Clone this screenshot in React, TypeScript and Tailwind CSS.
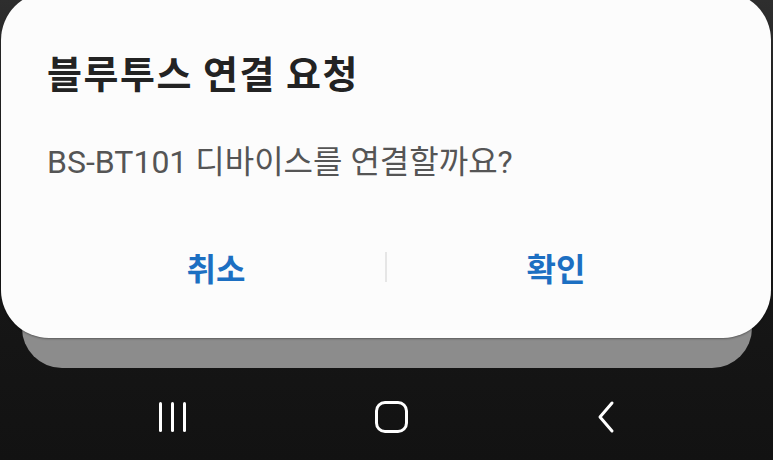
import { ChevronLeft } from 'lucide-react'

function NavBar() {
  return (
    <div className="flex flex-1 items-center justify-between pl-[159px] pr-[157px] pt-[6px]">
      {/* recents */}
      <div className="flex gap-[9px] h-[30px]">
        <span className="w-[3px] h-full rounded-full bg-white" />
        <span className="w-[3px] h-full rounded-full bg-white" />
        <span className="w-[3px] h-full rounded-full bg-white" />
      </div>
      {/* home */}
      <div className="w-[33px] h-[32px] rounded-[10px] border-[3px] border-white" />
      {/* back */}
      <svg width="20" height="34" viewBox="0 0 20 34" fill="none">
        <path d="M16 3 L4 17 L16 31" stroke="white" strokeWidth="3" strokeLinecap="round" strokeLinejoin="round" />
      </svg>
    </div>
  )
}

export default function App() {
  void ChevronLeft
  return (
    <div
      className="w-[773px] h-[460px] overflow-hidden flex flex-col bg-linear-to-b from-[#2e2e2e] via-[#181818] to-[#121212]"
      style={{ fontFamily: 'Roboto, "Noto Sans CJK KR", sans-serif' }}
    >
      {/* dialog stack */}
      <div className="relative -mt-[8px] pb-[30px]">
        {/* card behind the dialog */}
        <div className="absolute left-[22px] right-[21px] top-[60px] bottom-0 rounded-[40px] bg-[#8c8c8c]" />

        <div className="relative ml-[1px] w-[770px] h-[346px] rounded-[48px] bg-[#fcfcfc] shadow-[0_1px_2px_rgba(0,0,0,0.35)] flex flex-col px-[46px]">
          <h1
            className="mt-[56px] text-[38px] leading-[48px] font-bold text-[#232323] tracking-[1.5px]"
            style={{ fontFamily: '"Noto Sans CJK KR", sans-serif' }}
          >
            블루투스 연결 요청
          </h1>
          <p className="mt-[46px] text-[32px] leading-[40px] text-[#555555]">
            BS-BT101 디바이스를 연결할까요?
          </p>
          <div className="mt-[65px] flex items-center">
            <button
              className="flex-1 text-center text-[32px] leading-[40px] font-bold text-[#1c6fc2]"
              style={{ fontFamily: '"Noto Sans CJK KR", sans-serif' }}
            >
              취소
            </button>
            <span className="w-[2px] h-[30px] bg-[#e6e6e6]" />
            <button
              className="flex-1 text-center text-[32px] leading-[40px] font-bold text-[#1c6fc2]"
              style={{ fontFamily: '"Noto Sans CJK KR", sans-serif' }}
            >
              확인
            </button>
          </div>
        </div>
      </div>

      <NavBar />
    </div>
  )
}
